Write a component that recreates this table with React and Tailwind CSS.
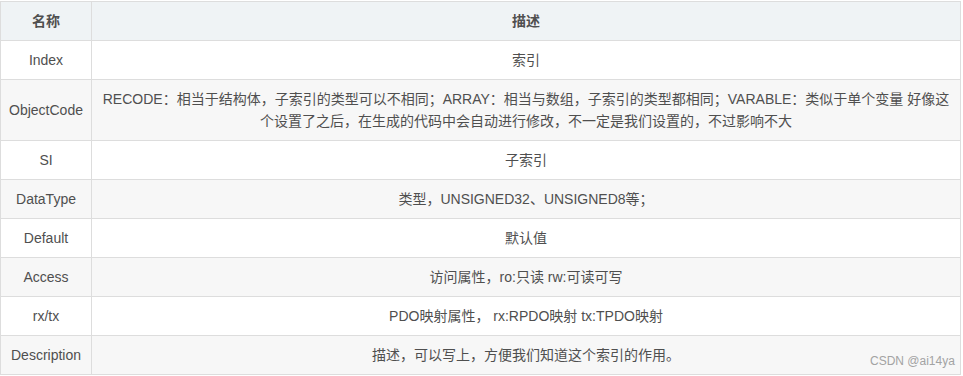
import React from 'react'

const rows = [
  ['Index', '索引'],
  [
    'ObjectCode',
    'RECODE：相当于结构体，子索引的类型可以不相同；ARRAY：相当与数组，子索引的类型都相同；VARABLE：类似于单个变量 好像这个设置了之后，在生成的代码中会自动进行修改，不一定是我们设置的，不过影响不大',
  ],
  ['SI', '子索引'],
  ['DataType', '类型，UNSIGNED32、UNSIGNED8等；'],
  ['Default', '默认值'],
  ['Access', '访问属性，ro:只读 rw:可读可写'],
  ['rx/tx', 'PDO映射属性， rx:RPDO映射 tx:TPDO映射'],
  ['Description', '描述，可以写上，方便我们知道这个索引的作用。'],
]

export default function App() {
  return (
    <div
      className="relative w-[963px] h-[376px] pt-[1px] bg-white text-[#4f4f4f] text-[14px] leading-[22px]"
      style={{ fontFamily: '"Liberation Sans", "Noto Sans CJK SC", sans-serif' }}
    >
      <table className="w-[961px] border-collapse table-fixed">
        <colgroup>
          <col className="w-[91px]" />
          <col />
        </colgroup>
        <thead>
          <tr className="bg-[#eff3f5]">
            <th className="border border-[#dddddd] px-[8px] py-[8px] font-bold text-center">名称</th>
            <th className="border border-[#dddddd] px-[10px] py-[8px] font-bold text-center">描述</th>
          </tr>
        </thead>
        <tbody>
          {rows.map(([name, desc], i) => (
            <tr key={name} className={i % 2 === 1 ? 'bg-[#f7f7f7]' : 'bg-white'}>
              <td className="border border-[#dddddd] px-[6px] py-[8px] text-center">{name}</td>
              <td className="border border-[#dddddd] px-[10px] py-[8px] text-center">{desc}</td>
            </tr>
          ))}
        </tbody>
      </table>

      {/* watermark */}
      <span className="absolute left-[870px] top-[353px] text-[12px] leading-[16px] text-[#a3a3a3]">
        CSDN @ai14ya
      </span>
    </div>
  )
}
